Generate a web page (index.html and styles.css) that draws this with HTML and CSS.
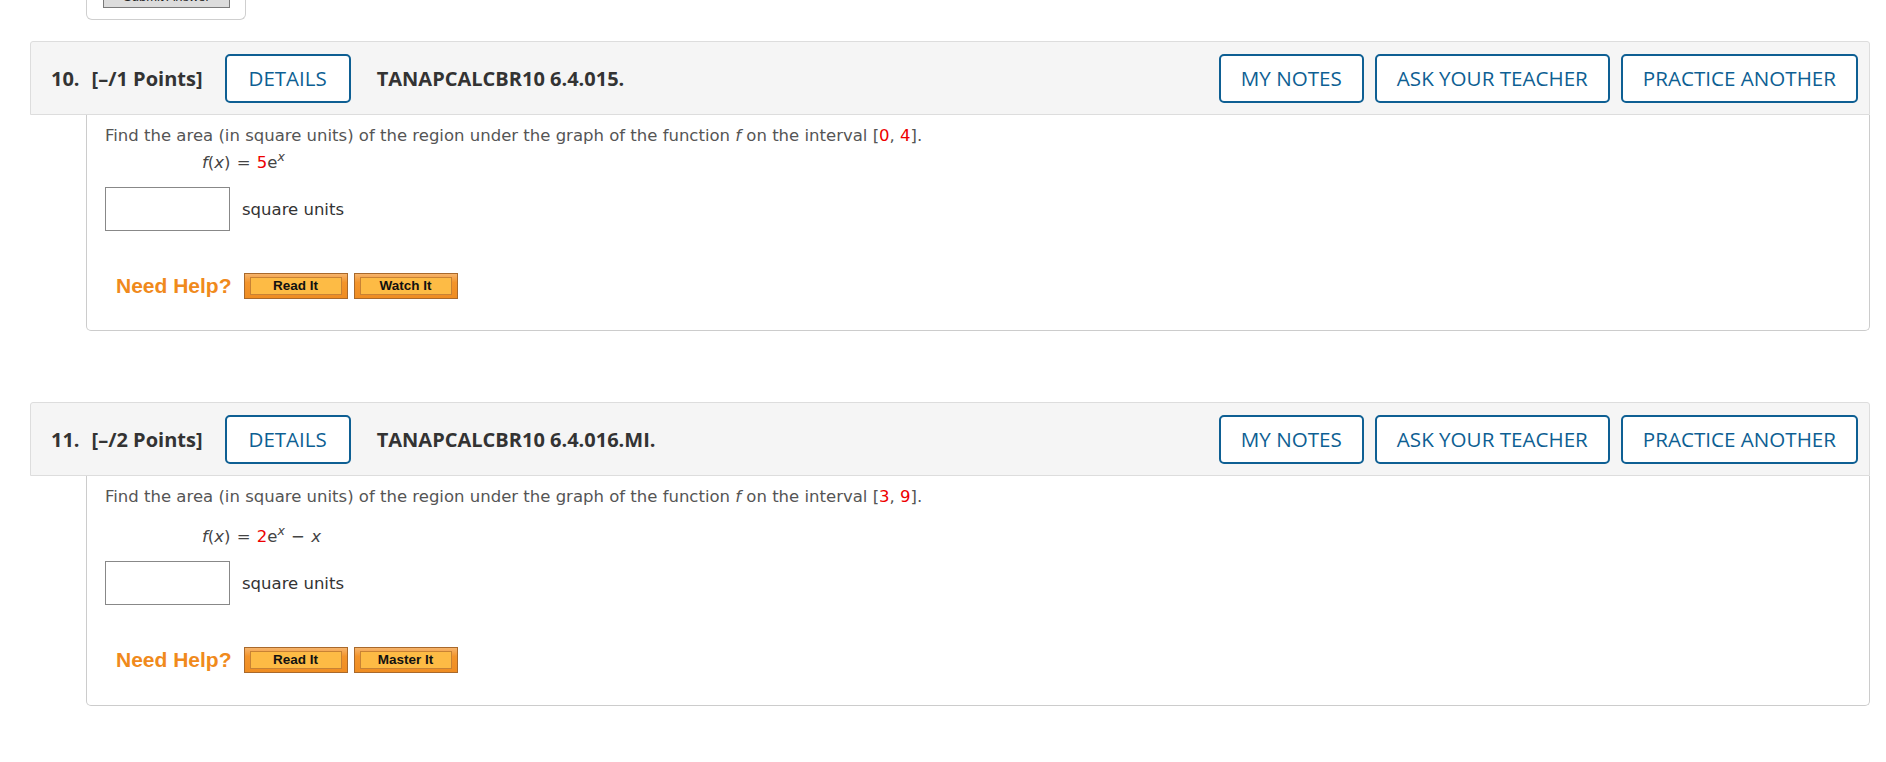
FILE: index.html
```html
<!DOCTYPE html>
<html>
<head>
<meta charset="utf-8">
<link rel="stylesheet" href="styles.css">
</head>
<body>
<div class="page">
  <div class="prev">
    <button class="submit">Submit Answer</button>
  </div>

  <section class="q q-first">
    <header class="qhead">
      <span class="qnum">10.</span>
      <span class="qpts">[–/1 Points]</span>
      <button class="btn">DETAILS</button>
      <span class="qid">TANAPCALCBR10 6.4.015.</span>
      <div class="actions">
        <button class="btn">MY NOTES</button>
        <button class="btn">ASK YOUR TEACHER</button>
        <button class="btn">PRACTICE ANOTHER</button>
      </div>
    </header>
    <div class="qbody">
      <p class="prompt">Find the area (in square units) of the region under the graph of the function <i>f</i> on the interval [<span class="red">0</span>, <span class="red">4</span>].</p>
      <p class="formula"><i>f</i>(<i>x</i>) = <span class="red">5</span>e<sup><i>x</i></sup></p>
      <div class="answer"><span class="box"></span><span class="unit">square units</span></div>
      <div class="help">
        <span class="need">Need Help?</span>
        <button class="hbtn"><span>Read It</span></button>
        <button class="hbtn"><span>Watch It</span></button>
      </div>
    </div>
  </section>

  <section class="q q-second">
    <header class="qhead">
      <span class="qnum">11.</span>
      <span class="qpts">[–/2 Points]</span>
      <button class="btn">DETAILS</button>
      <span class="qid">TANAPCALCBR10 6.4.016.MI.</span>
      <div class="actions">
        <button class="btn">MY NOTES</button>
        <button class="btn">ASK YOUR TEACHER</button>
        <button class="btn">PRACTICE ANOTHER</button>
      </div>
    </header>
    <div class="qbody qbody-second">
      <p class="prompt">Find the area (in square units) of the region under the graph of the function <i>f</i> on the interval [<span class="red">3</span>, <span class="red">9</span>].</p>
      <p class="formula formula-gap"><i>f</i>(<i>x</i>) = <span class="red">2</span>e<sup><i>x</i></sup> − <i>x</i></p>
      <div class="answer"><span class="box"></span><span class="unit">square units</span></div>
      <div class="help">
        <span class="need">Need Help?</span>
        <button class="hbtn"><span>Read It</span></button>
        <button class="hbtn"><span>Master It</span></button>
      </div>
    </div>
  </section>
</div>
</body>
</html>
```

FILE: styles.css
```css
html, body {
  margin: 0;
  padding: 0;
  background: #ffffff;
}

.page {
  padding: 0 16px 40px 30px;
  font-family: "DejaVu Sans", Verdana, sans-serif;
}

.prev {
  margin-left: 56px;
  width: 160px;
  height: 20px;
  box-sizing: border-box;
  border: 1px solid #cfcfcf;
  border-top: none;
  border-radius: 0 0 6px 6px;
  display: flex;
  align-items: flex-end;
  padding: 0 0 11px 16px;
  overflow: hidden;
}

.submit {
  flex: none;
  width: 127px;
  height: 24px;
  background: #dcdcdc;
  border: 1px solid #7a7a7a;
  font-family: "Liberation Sans", Arial, sans-serif;
  font-size: 13px;
  color: #222;
  padding: 0;
}

.q-first { margin-top: 21px; }
.q-second { margin-top: 71px; }

.qhead {
  height: 72px;
  background: #f5f5f5;
  border: 1px solid #dddddd;
  border-radius: 3px 3px 0 0;
  display: flex;
  align-items: center;
  padding: 0 11px 0 20px;
  font-family: "Open Sans", sans-serif;
  font-size: 20px;
  color: #333333;
}

.qnum {
  font-weight: 700;
  margin-right: 12px;
}

.qpts {
  font-weight: 700;
  margin-right: 22px;
}

.qid {
  font-weight: 700;
  margin-left: 26px;
}

.btn {
  height: 49px;
  box-sizing: border-box;
  padding: 0 22px;
  border: 2px solid #0e5f93;
  border-radius: 5px;
  background: #ffffff;
  color: #0e5f93;
  font-family: "Open Sans", sans-serif;
  font-size: 20.5px;
  font-weight: 400;
  white-space: nowrap;
}

.actions {
  margin-left: auto;
  display: flex;
  gap: 11px;
}

.actions .btn {
  padding: 0 20px;
  font-size: 20.6px;
}

.qbody {
  margin-left: 56px;
  border: 1px solid #cccccc;
  border-top: none;
  border-radius: 0 0 5px 5px;
  padding: 10px 18px 31px 18px;
  color: #555555;
  font-size: 16.5px;
}

.qbody-second {
  padding-bottom: 32px;
}

.prompt {
  margin: 0;
  line-height: 22px;
}

.formula {
  margin: 5px 0 0 97px;
  line-height: 22px;
  color: #444444;
  word-spacing: 1px;
}

.formula-gap { margin-top: 18px; }

.formula sup {
  font-size: 12.5px;
  line-height: 0;
  vertical-align: 7px;
}

.red { color: #ee0000; }

.answer {
  margin-top: 13px;
  display: flex;
  align-items: center;
  gap: 12px;
}

.box {
  width: 125px;
  height: 44px;
  box-sizing: border-box;
  border: 1px solid #888888;
  background: #fff;
}

.unit {
  color: #333333;
}

.help {
  margin-top: 42px;
  margin-left: 11px;
  display: flex;
  align-items: center;
  gap: 6px;
}

.need {
  font-family: "Liberation Sans", Arial, sans-serif;
  font-weight: 700;
  font-size: 21px;
  color: #f08a1c;
  margin-right: 6px;
}

.hbtn {
  width: 104px;
  height: 26px;
  box-sizing: border-box;
  padding: 3px 5px;
  border: 1px solid #a9692b;
  background: linear-gradient(#f6b46c, #f3952c 35%, #ef8d22);
  display: flex;
}

.hbtn span {
  flex: 1;
  border: 1px solid #c88234;
  background: #fdbb45;
  font-family: "Liberation Sans", Arial, sans-serif;
  font-weight: 700;
  font-size: 13.5px;
  line-height: 16px;
  color: #111;
  text-align: center;
}
```
